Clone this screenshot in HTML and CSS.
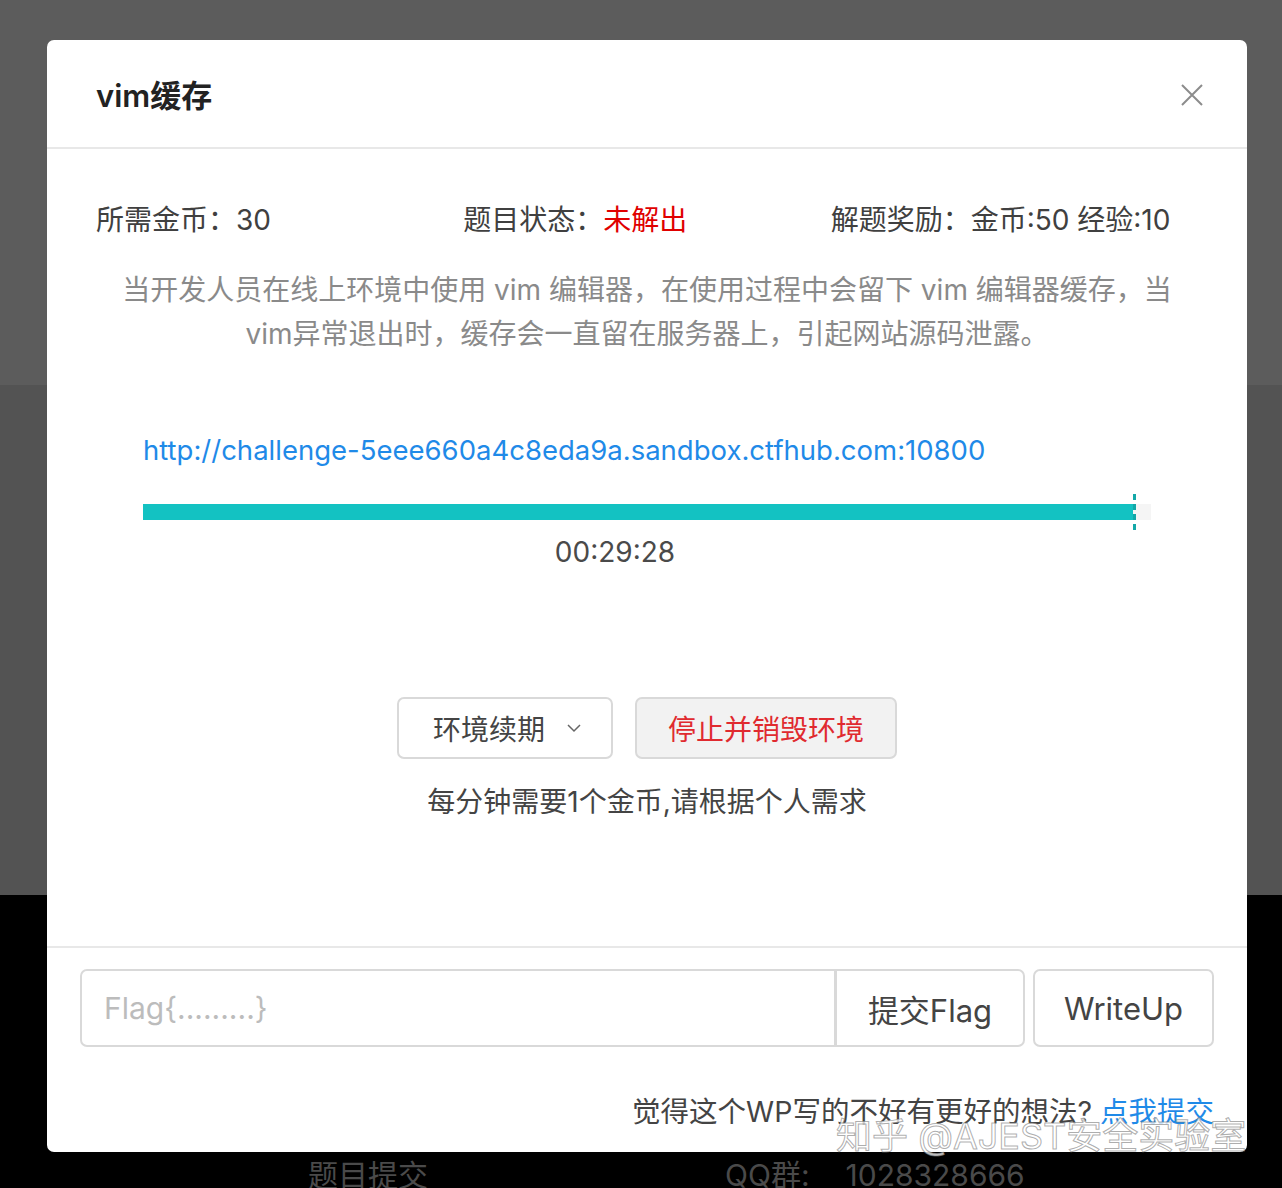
FILE: index.html
```html
<!DOCTYPE html>
<html lang="zh-CN">

<head>
    <meta charset="UTF-8">
    <meta name="viewport" content="width=device-width, initial-scale=1.0">
    <title>vim缓存</title>
    <link rel="stylesheet" href="styles.css">
</head>

<body>
    <div class="page">
        <div class="page-top"></div>
        <div class="page-mid"></div>
        <footer class="page-foot">
            <span class="foot-title">题目提交</span>
            <span class="foot-qq">QQ群:</span>
            <span class="foot-num">1028328666</span>
        </footer>
    </div>

    <div class="modal">
        <div class="modal-header">
            <h2 class="modal-title">vim缓存</h2>
            <button class="modal-close" aria-label="关闭">
                <svg width="24" height="24" viewBox="0 0 24 24">
                    <path d="M2 2 L22 22 M22 2 L2 22" stroke="#8c8c8c" stroke-width="2" fill="none" />
                </svg>
            </button>
        </div>

        <div class="modal-body">
            <div class="stats">
                <div class="stat">所需金币：30</div>
                <div class="stat">题目状态：<span class="status-red">未解出</span></div>
                <div class="stat">解题奖励：金币:50 经验:10</div>
            </div>

            <p class="desc">当开发人员在线上环境中使用 vim 编辑器，在使用过程中会留下 vim 编辑器缓存，当vim异常退出时，缓存会一直留在服务器上，引起网站源码泄露。</p>

            <div class="env">
                <a class="env-url" href="#">http://challenge-5eee660a4c8eda9a.sandbox.ctfhub.com:10800</a>
                <div class="progress">
                    <div class="progress-bar" style="width: 98.2%;"></div>
                    <span class="progress-mark"></span>
                </div>
                <div class="timer">00:29:28</div>
            </div>

            <div class="actions">
                <button class="btn btn-renew">环境续期
                    <svg width="14" height="10" viewBox="0 0 14 10">
                        <path d="M1 2 L7 8 L13 2" stroke="#666" stroke-width="1.5" fill="none" />
                    </svg>
                </button>
                <button class="btn btn-stop">停止并销毁环境</button>
            </div>
            <div class="note">每分钟需要1个金币,请根据个人需求</div>
        </div>

        <div class="modal-footer">
            <div class="flag-row">
                <div class="flag-group">
                    <input class="flag-input" type="text" placeholder="Flag{.........}">
                    <button class="btn btn-submit">提交Flag</button>
                </div>
                <button class="btn btn-wp">WriteUp</button>
            </div>
            <div class="wp-tip">觉得这个WP写的不好有更好的想法? <a href="#">点我提交</a></div>
        </div>
    </div>

    <div class="watermark">知乎 @AJEST安全实验室</div>
</body>

</html>
```

FILE: styles.css
```css
* {
    box-sizing: border-box;
    margin: 0;
    padding: 0;
}

body {
    font-family: 'Inter', 'Noto Sans CJK SC', sans-serif;
    background: #000;
    width: 1282px;
    height: 1188px;
    overflow: hidden;
    position: relative;
}

.page-top {
    height: 385px;
    background: #5c5c5c;
}

.page-mid {
    height: 510px;
    background: #535353;
}

.page-foot {
    height: 293px;
    background: #000;
    color: #4a4a4a;
    font-size: 30px;
    display: flex;
    padding: 262px 0 0 308px;
    line-height: 36px;
}

.foot-qq {
    margin-left: 297px;
}

.foot-num {
    margin-left: 36px;
}

.modal {
    position: absolute;
    left: 47px;
    top: 40px;
    width: 1200px;
    height: 1112px;
    background: #fff;
    border-radius: 7px;
    display: flex;
    flex-direction: column;
}

.modal-header {
    height: 109px;
    border-bottom: 2px solid #e8e8e8;
    display: flex;
    align-items: center;
    justify-content: space-between;
    padding: 0 34px 0 49px;
}

.modal-title {
    font-size: 31px;
    font-weight: 600;
    color: #222;
}

.modal-close {
    border: none;
    background: none;
    width: 42px;
    height: 42px;
    display: flex;
    align-items: center;
    justify-content: center;
    margin-top: 2px;
}

.modal-body {
    flex: 1;
    padding: 53px 49px 0;
}

.stats {
    display: grid;
    grid-template-columns: repeat(3, 1fr);
    font-size: 28px;
    line-height: 36px;
    color: #404040;
}

.status-red {
    color: #e00000;
}

.desc {
    margin-top: 30px;
    text-align: center;
    font-size: 28px;
    line-height: 44px;
    color: #8a8a8a;
    padding: 0 12px;
}

.env {
    margin-top: 76px;
    padding: 0 47px;
}

.env-url {
    display: block;
    font-size: 27.5px;
    line-height: 36px;
    color: #1f8ae8;
    text-decoration: none;
}

.progress {
    margin-top: 36px;
    height: 16px;
    background: #f5f5f5;
    position: relative;
}

.progress-bar {
    height: 100%;
    background: #13c2c2;
}

.progress-mark {
    position: absolute;
    left: 98.2%;
    top: -10px;
    height: 36px;
    border-left: 3px dashed #13a8a8;
}

.timer {
    margin-top: 14px;
    text-align: center;
    padding-right: 64px;
    font-size: 28px;
    line-height: 36px;
    color: #4a4a4a;
}

.actions {
    margin-top: 127px;
    display: flex;
    justify-content: center;
    gap: 22px;
}

.btn {
    font-family: inherit;
    height: 62px;
    border: 2px solid #d9d9d9;
    border-radius: 7px;
    background: #fff;
    font-size: 28px;
    color: #444;
    cursor: pointer;
}

.btn-renew {
    width: 216px;
    display: flex;
    align-items: center;
    justify-content: center;
    gap: 22px;
    padding-left: 4px;
}

.btn-stop {
    width: 262px;
    background: #f2f2f2;
    color: #e02a2f;
}

.note {
    margin-top: 25px;
    text-align: center;
    font-size: 28px;
    line-height: 36px;
    color: #444;
}

.modal-footer {
    height: 206px;
    border-top: 2px solid #e8e8e8;
    padding: 21px 33px 0;
}

.flag-row {
    display: flex;
    gap: 8px;
}

.flag-group {
    flex: 1;
    display: flex;
}

.flag-input {
    flex: 1;
    height: 78px;
    border: 2px solid #d9d9d9;
    border-radius: 7px 0 0 7px;
    padding: 0 22px;
    font-family: inherit;
    font-size: 30px;
    outline: none;
}

.flag-input::placeholder {
    color: #bcbcbc;
}

.btn-submit {
    width: 190px;
    height: 78px;
    margin-left: -1px;
    border-radius: 0 7px 7px 0;
    font-size: 31px;
}

.btn-wp {
    width: 181px;
    height: 78px;
    font-size: 31px;
}

.wp-tip {
    margin-top: 47px;
    text-align: right;
    font-size: 28.5px;
    line-height: 36px;
    color: #444;
}

.wp-tip a {
    color: #1f8ae8;
    text-decoration: none;
}

.watermark {
    position: absolute;
    left: 836px;
    top: 1112px;
    font-size: 36px;
    line-height: 48px;
    color: rgba(255, 255, 255, 0.75);
    -webkit-text-stroke: 1px rgba(120, 120, 120, 0.6);
    white-space: nowrap;
}
```
